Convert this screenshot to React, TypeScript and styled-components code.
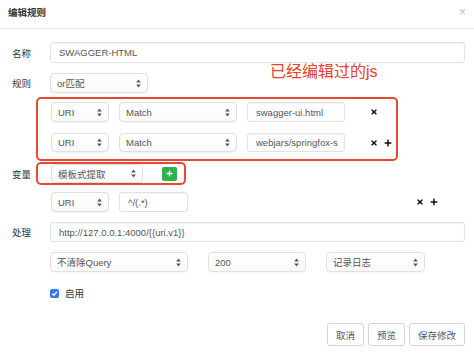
import React from 'react';
import styled, {createGlobalStyle} from "styled-components";
import {FaTimes, FaPlus} from "react-icons/fa";

const GlobalStyle = createGlobalStyle`
html, body {
margin: 0;
padding: 0;
background: #fff;
}
body {
font-family: "Liberation Sans", "Noto Sans CJK SC", sans-serif;
color: #333;
}
* { box-sizing: border-box; }`;

type RowProps = {
    $mt?: number;
}

type BoxProps = {
    $mt?: number;
    $w: number;
}

type FieldProps = {
    $w: number;
    $h?: number;
}

const Dialog = styled.div`
position: relative;
width: 474px;
height: 353px;
background: #fff;`;

const Header = styled.div`
height: 29px;
display: flex;
align-items: center;
justify-content: space-between;
padding: 0 8px 4px 8px;
border-bottom: 1px solid #e9e9e9;`;

const Title = styled.div`
font-size: 9.5px;
font-weight: bold;
color: #333;`;

const Close = styled.span`
color: #c4c4c4;
font-size: 12px;
line-height: 1;`;

const Body = styled.div`
padding: 13px 9px 0 12px;
display: flex;
flex-direction: column;`;

const Row = styled.div<RowProps>`
display: flex;
align-items: center;
margin-top: ${(props) => (props.$mt ?? 0) + 'px'};`;

const Label = styled.div`
width: 38px;
flex-shrink: 0;
font-size: 9.5px;
color: #333;`;

const Fields = styled.div<{$gap?: number}>`
display: flex;
align-items: center;
gap: ${(props) => (props.$gap ?? 10) + 'px'};`;

const RedBox = styled.div<BoxProps>`
width: ${(props) => props.$w + 'px'};
margin-left: -14px;
margin-top: ${(props) => (props.$mt ?? 0) + 'px'};
border: 2px solid #e9472f;
border-radius: 5px;
padding: 3px 0 7px 13px;
display: flex;
flex-direction: column;
gap: 11px;`;

const RedBoxSmall = styled(RedBox)`
padding: 0 0 0 13px;
flex-direction: row;
align-items: center;
gap: 19px;`;

const Input = styled.div<FieldProps>`
width: ${(props) => props.$w + 'px'};
height: ${(props) => (props.$h ?? 20) + 'px'};
border: 1px solid #e2e2e2;
border-radius: 3px;
box-shadow: inset 0 1px 1px rgba(0,0,0,0.04);
padding-left: 8px;
display: flex;
align-items: center;
font-size: 9.5px;
color: #555;
white-space: nowrap;
overflow: hidden;`;

const Select = styled.div<FieldProps>`
width: ${(props) => props.$w + 'px'};
height: ${(props) => (props.$h ?? 20) + 'px'};
border: 1px solid #e0e0e0;
border-radius: 4px;
background: linear-gradient(#ffffff, #fafafa);
box-shadow: 0 1px 1px rgba(0,0,0,0.04);
padding: 0 6px;
display: flex;
align-items: center;
justify-content: space-between;
font-size: 9.5px;
color: #555;
white-space: nowrap;`;

const Actions = styled.div<{$ml: number}>`
display: flex;
align-items: center;
gap: 6px;
margin-left: ${(props) => props.$ml + 'px'};
color: #111;`;

const PlusButton = styled.div`
width: 15px;
height: 14px;
border-radius: 2px;
background: #2db34a;
display: flex;
align-items: center;
justify-content: center;
color: #fff;`;

const Spacer = styled.div<{$w: number}>`
width: ${(props) => props.$w + 'px'};
flex-shrink: 0;`;

const Check = styled.label`
display: flex;
align-items: center;
gap: 6px;
font-size: 9.5px;
color: #333;`;

const Footer = styled.div`
display: flex;
justify-content: flex-end;
gap: 4px;
margin-top: 23px;`;

const Button = styled.div`
height: 23px;
padding: 0 8px;
border: 1px solid #d4d4d4;
border-radius: 3px;
background: #fff;
display: flex;
align-items: center;
font-size: 9.5px;
color: #555;`;

const Note = styled.div`
position: absolute;
left: 270px;
top: 62px;
font-size: 16px;
line-height: 20px;
color: #e8412c;`;

const Arrows = () => (
    <svg width="5" height="9" viewBox="0 0 5 9">
        <path d="M2.5 0.5 L4.8 3.6 L0.2 3.6 Z" fill="#555"/>
        <path d="M2.5 8.5 L4.8 5.4 L0.2 5.4 Z" fill="#555"/>
    </svg>
);

const Sel = ({w, h, text}: {w: number; h?: number; text: string}) => (
    <Select $w={w} $h={h}>
        <span>{text}</span>
        <Arrows/>
    </Select>
);

const CheckMark = () => (
    <svg width="9" height="9" viewBox="0 0 9 9">
        <rect x="0" y="0" width="9" height="9" rx="2" fill="#2f7cf0"/>
        <path d="M2.2 4.6 L3.9 6.2 L6.9 2.8" stroke="#fff" strokeWidth="1.3" fill="none"/>
    </svg>
);

const App = () => {
    return (
        <Dialog>
            <GlobalStyle/>
            <Header>
                <Title>编辑规则</Title>
                <Close>×</Close>
            </Header>
            <Body>
                <Row>
                    <Label>名称</Label>
                    <Input $w={415} $h={21}>SWAGGER-HTML</Input>
                </Row>
                <Row $mt={10}>
                    <Label>规则</Label>
                    <Sel w={98} text="or匹配"/>
                </Row>
                <Row>
                    <Spacer $w={38}/>
                    <RedBox $w={362} $mt={4}>
                        <Fields>
                            <Sel w={58} text="URI"/>
                            <Sel w={118} text="Match"/>
                            <Input $w={98}>swagger-ui.html</Input>
                            <Actions $ml={15}>
                                <FaTimes size={8}/>
                            </Actions>
                        </Fields>
                        <Fields>
                            <Sel w={58} h={19} text="URI"/>
                            <Sel w={118} h={19} text="Match"/>
                            <Input $w={98} $h={19}>webjars/springfox-s</Input>
                            <Actions $ml={15}>
                                <FaTimes size={8}/>
                                <FaPlus size={8}/>
                            </Actions>
                        </Fields>
                    </RedBox>
                </Row>
                <Row $mt={1}>
                    <Label>变量</Label>
                    <RedBoxSmall $w={150}>
                        <Sel w={92} h={19} text="模板式提取"/>
                        <PlusButton><FaPlus size={7}/></PlusButton>
                    </RedBoxSmall>
                </Row>
                <Row $mt={7}>
                    <Spacer $w={39}/>
                    <Fields>
                        <Sel w={58} text="URI"/>
                        <Input $w={69}>^/(.*)</Input>
                    </Fields>
                    <Actions $ml={228}>
                        <FaTimes size={8}/>
                        <FaPlus size={8}/>
                    </Actions>
                </Row>
                <Row $mt={10}>
                    <Label>处理</Label>
                    <Input $w={415}>http://127.0.0.1:4000/{'{{uri.v1}}'}</Input>
                </Row>
                <Row $mt={10}>
                    <Spacer $w={38}/>
                    <Fields $gap={20}>
                        <Sel w={138} text="不清除Query"/>
                        <Sel w={98} text="200"/>
                        <Sel w={99} text="记录日志"/>
                    </Fields>
                </Row>
                <Row $mt={14}>
                    <Spacer $w={38}/>
                    <Check>
                        <CheckMark/>
                        启用
                    </Check>
                </Row>
                <Footer>
                    <Button>取消</Button>
                    <Button>预览</Button>
                    <Button>保存修改</Button>
                </Footer>
            </Body>
            <Note>已经编辑过的js</Note>
        </Dialog>
    );
};

export default App;
